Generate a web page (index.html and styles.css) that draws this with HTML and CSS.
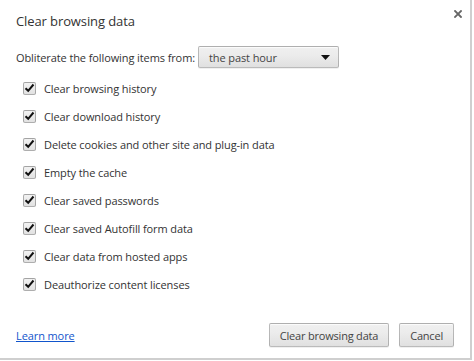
FILE: index.html
```html
<!DOCTYPE html>
<html>
<head>
<meta charset="utf-8">
<link rel="stylesheet" href="styles.css">
</head>
<body>
<div class="dialog">
  <div class="header">
    <div class="title">Clear browsing data</div>
    <div class="close">
      <svg width="8" height="8" viewBox="0 0 8 8"><path d="M1 1L7 7M7 1L1 7" stroke="#666" stroke-width="1.8" stroke-linecap="square"/></svg>
    </div>
  </div>
  <div class="period">
    <span class="period-label">Obliterate the following items from:</span>
    <div class="select">
      <span>the past hour</span>
      <svg class="arrow" width="9" height="5" viewBox="0 0 9 5"><path d="M0 0H9L4.5 5Z" fill="#111"/></svg>
    </div>
  </div>
  <ul class="items">
    <li class="item"><span class="box"><svg width="11" height="10" viewBox="0 0 11 10"><path d="M1.5 5.2L4.2 7.8L9.5 1.5" fill="none" stroke="#111" stroke-width="2"/></svg></span>Clear browsing history</li>
    <li class="item"><span class="box"><svg width="11" height="10" viewBox="0 0 11 10"><path d="M1.5 5.2L4.2 7.8L9.5 1.5" fill="none" stroke="#111" stroke-width="2"/></svg></span>Clear download history</li>
    <li class="item"><span class="box"><svg width="11" height="10" viewBox="0 0 11 10"><path d="M1.5 5.2L4.2 7.8L9.5 1.5" fill="none" stroke="#111" stroke-width="2"/></svg></span>Delete cookies and other site and plug-in data</li>
    <li class="item"><span class="box"><svg width="11" height="10" viewBox="0 0 11 10"><path d="M1.5 5.2L4.2 7.8L9.5 1.5" fill="none" stroke="#111" stroke-width="2"/></svg></span>Empty the cache</li>
    <li class="item"><span class="box"><svg width="11" height="10" viewBox="0 0 11 10"><path d="M1.5 5.2L4.2 7.8L9.5 1.5" fill="none" stroke="#111" stroke-width="2"/></svg></span>Clear saved passwords</li>
    <li class="item"><span class="box"><svg width="11" height="10" viewBox="0 0 11 10"><path d="M1.5 5.2L4.2 7.8L9.5 1.5" fill="none" stroke="#111" stroke-width="2"/></svg></span>Clear saved Autofill form data</li>
    <li class="item"><span class="box"><svg width="11" height="10" viewBox="0 0 11 10"><path d="M1.5 5.2L4.2 7.8L9.5 1.5" fill="none" stroke="#111" stroke-width="2"/></svg></span>Clear data from hosted apps</li>
    <li class="item"><span class="box"><svg width="11" height="10" viewBox="0 0 11 10"><path d="M1.5 5.2L4.2 7.8L9.5 1.5" fill="none" stroke="#111" stroke-width="2"/></svg></span>Deauthorize content licenses</li>
  </ul>
  <div class="footer">
    <a class="link" href="#">Learn more</a>
    <div class="buttons">
      <button class="btn">Clear browsing data</button>
      <button class="btn">Cancel</button>
    </div>
  </div>
</div>
</body>
</html>
```
FILE: styles.css
```css
html, body {
  margin: 0;
  padding: 0;
  background: #fff;
}
body {
  font-family: "Open Sans", "Noto Sans", sans-serif;
  font-size: 11px;
  letter-spacing: -0.1px;
  color: #333;
}
.dialog {
  box-sizing: border-box;
  width: 472px;
  height: 360px;
  border-right: 2px solid #cfcfcf;
  border-bottom: 2px solid #cfcfcf;
  display: flex;
  flex-direction: column;
  background: #fff;
}
.header {
  display: flex;
  justify-content: space-between;
  align-items: flex-start;
  padding: 0 8px 0 16px;
}
.title {
  margin-top: 10px;
  line-height: 22px;
  font-size: 13px;
  color: #333;
}
.close {
  margin-top: 10px;
  width: 8px;
  height: 8px;
  display: flex;
}
.period {
  display: flex;
  align-items: center;
  margin-top: 14px;
  padding-left: 16px;
  height: 22px;
}
.period-label {
  margin-right: 3px;
}
.select {
  box-sizing: border-box;
  width: 141px;
  height: 22px;
  display: flex;
  align-items: center;
  justify-content: space-between;
  padding: 0 8px 0 10px;
  border: 1px solid rgba(0,0,0,0.22);
  border-radius: 2px;
  background: linear-gradient(#f0f0f0, #ececec 40%, #e0e0e0);
  box-shadow: 0 1px 0 rgba(0,0,0,0.06), inset 0 1px 1px rgba(255,255,255,0.8);
  color: #444;
}
.items {
  list-style: none;
  margin: 6px 0 0;
  padding: 0 0 0 23px;
}
.item {
  display: flex;
  align-items: center;
  height: 28px;
}
.box {
  box-sizing: border-box;
  width: 13px;
  height: 13px;
  margin-right: 8px;
  border: 1px solid rgba(0,0,0,0.28);
  border-radius: 2px;
  background: linear-gradient(#f2f2f2, #e2e2e2);
  display: flex;
  align-items: center;
  justify-content: center;
}
.footer {
  margin-top: auto;
  padding: 0 16px 11px 16px;
  display: flex;
  justify-content: space-between;
  align-items: center;
}
.link {
  color: #15c;
  text-decoration: underline;
}
.buttons {
  display: flex;
  gap: 10px;
}
.btn {
  box-sizing: border-box;
  height: 24px;
  padding: 0 10px;
  font-family: inherit;
  font-size: 11px;
  letter-spacing: -0.2px;
  color: #444;
  border: 1px solid rgba(0,0,0,0.22);
  border-radius: 2px;
  background: linear-gradient(#f0f0f0, #ececec 40%, #e0e0e0);
  box-shadow: 0 1px 0 rgba(0,0,0,0.06), inset 0 1px 1px rgba(255,255,255,0.8);
}
```
